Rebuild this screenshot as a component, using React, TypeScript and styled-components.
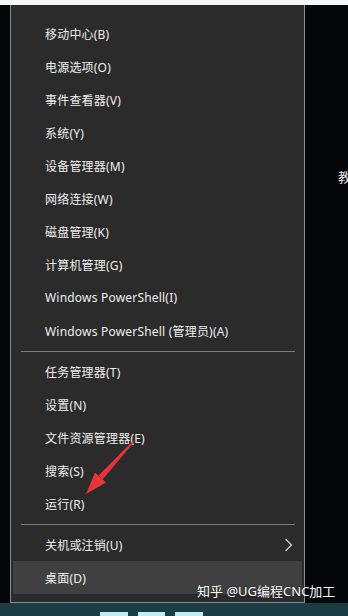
import React from "react";
import styled, { createGlobalStyle } from "styled-components";

const Global = createGlobalStyle`
  html, body { margin: 0; padding: 0; background: #06070a; }
  #root { width: 348px; height: 616px; }
`;

const Page = styled.div`
  position: relative;
  width: 348px;
  height: 616px;
  overflow: hidden;
  background: #06070a;
  display: flex;
  flex-direction: column;
  font-family: "Noto Sans", "Noto Sans CJK SC", sans-serif;
`;

const TopStrip = styled.div`
  height: 5px;
  background: #f6f6f6;
  flex: none;
`;

const Middle = styled.div`
  display: flex;
  flex: none;
  height: 598px;
`;

const Gutter = styled.div`
  width: 10px;
  flex: none;
  background: #050607;
`;

const Menu = styled.div`
  width: 295px;
  flex: none;
  box-sizing: border-box;
  background: #2b2b2b;
  border: 1px solid #8c8c8c;
  border-top: none;
  padding: 12px 0 4px;
  display: flex;
  flex-direction: column;
`;

const Item = styled.div<{ $active?: boolean }>`
  height: 33px;
  flex: none;
  margin: 0 2px;
  padding: 0 9px 0 32px;
  display: flex;
  align-items: center;
  justify-content: space-between;
  background: ${(p) => (p.$active ? "#404040" : "transparent")};
  color: #efefef;
  font-size: 12px;
  letter-spacing: 0.2px;
  white-space: nowrap;
`;

const Separator = styled.div`
  height: 8px;
  flex: none;
  display: flex;
  align-items: center;
  padding: 0 9px 0 10px;
  &::after {
    content: "";
    flex: 1;
    height: 1px;
    background: #7b7b7b;
  }
`;

const RightArea = styled.div`
  flex: 1;
  background: #05070b;
  padding-top: 164px;
  display: flex;
  justify-content: flex-end;
  overflow: hidden;
`;

const EdgeChar = styled.span`
  color: #e8e8e8;
  font-size: 13px;
  line-height: 16px;
  margin-right: -3px;
`;

const Taskbar = styled.div`
  flex: 1;
  background: #1a3d43;
  display: flex;
  align-items: flex-end;
  gap: 10px;
  padding-left: 100px;
`;

const TaskTile = styled.div<{ $w: number }>`
  width: ${(p) => p.$w}px;
  height: 4px;
  background: #bfeef2;
`;

const Watermark = styled.div`
  position: absolute;
  left: 197px;
  top: 582px;
  color: #ffffff;
  font-family: "Noto Sans", "Noto Sans CJK SC", sans-serif;
  font-size: 13px;
  line-height: 18px;
  text-shadow: 0 0 2px rgba(0, 0, 0, 0.6);
  white-space: nowrap;
`;

const ArrowSvg = styled.svg`
  position: absolute;
  left: 0;
  top: 0;
  pointer-events: none;
`;

const Chevron = () => (
  <svg width="9" height="14" viewBox="0 0 9 14">
    <path d="M1.5 1 L7.5 7 L1.5 13" fill="none" stroke="#cfcfcf" strokeWidth="1.3" />
  </svg>
);

const group1 = [
  "移动中心(B)",
  "电源选项(O)",
  "事件查看器(V)",
  "系统(Y)",
  "设备管理器(M)",
  "网络连接(W)",
  "磁盘管理(K)",
  "计算机管理(G)",
  "Windows PowerShell(I)",
  "Windows PowerShell (管理员)(A)",
];

const group2 = ["任务管理器(T)", "设置(N)", "文件资源管理器(E)", "搜索(S)", "运行(R)"];

export default function App() {
  return (
    <>
      <Global />
      <Page>
        <TopStrip />
        <Middle>
          <Gutter />
          <Menu>
            {group1.map((t) => (
              <Item key={t}>{t}</Item>
            ))}
            <Separator />
            {group2.map((t) => (
              <Item key={t}>{t}</Item>
            ))}
            <Separator />
            <Item>
              关机或注销(U)
              <Chevron />
            </Item>
            <Item $active>桌面(D)</Item>
          </Menu>
          <RightArea>
            <EdgeChar>教</EdgeChar>
          </RightArea>
        </Middle>
        <Taskbar>
          <TaskTile $w={28} />
          <TaskTile $w={27} />
          <TaskTile $w={28} />
        </Taskbar>
        <Watermark>知乎 @UG编程CNC加工</Watermark>
        <ArrowSvg width="348" height="616" viewBox="0 0 348 616">
          <polygon points="133,441 134,442 102.6,479.5 98.6,475.5" fill="#e5353b" />
          <polygon points="86,494 106,482.5 95,472.5" fill="#e5353b" />
        </ArrowSvg>
      </Page>
    </>
  );
}
